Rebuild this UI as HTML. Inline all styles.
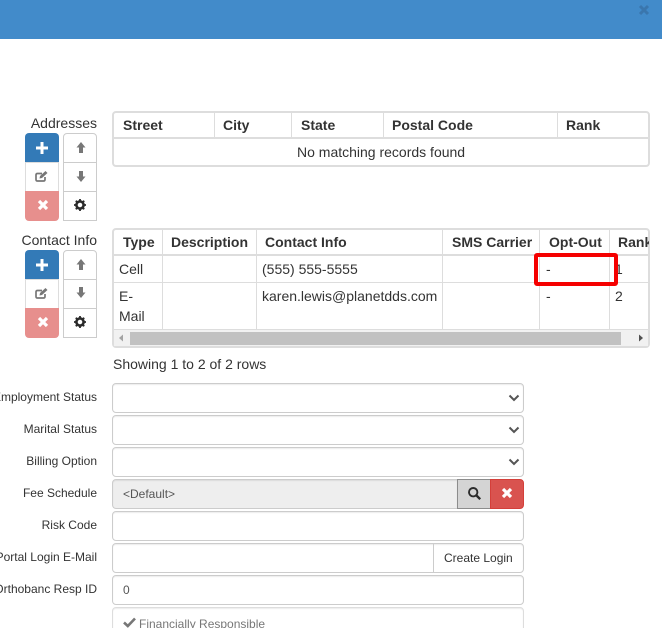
<!DOCTYPE html>
<html><head><meta charset="utf-8">
<style>
html,body{margin:0;padding:0;background:#fff}
#p{position:relative;width:662px;height:628px;overflow:hidden;background:#fff;font-family:"Liberation Sans",sans-serif;font-size:14px;color:#333}
#p div,#p svg{position:absolute;box-sizing:border-box}
.t{white-space:nowrap;line-height:20px}
.b{font-weight:bold}
.l{right:565px;font-size:12px;white-space:nowrap;line-height:16px;text-align:right}
.l2{right:565px;font-size:14px;white-space:nowrap;line-height:18px}
.c{left:112px;width:412px;height:30px;border:1px solid #ccc;border-radius:4px;box-shadow:inset 0 1px 1px rgba(0,0,0,.075);background:#fff}
.h{background:#ddd}
.s{font-size:12px;white-space:nowrap;line-height:16px}
</style></head><body><div id="p">
<div style="left:0;top:0;width:662px;height:39px;background:#428bca"></div>
<svg style="left:638px;top:4px" width="12" height="12" viewBox="0 0 12 12"><path d="M2 2L10 10M10 2L2 10" stroke="#3a76ad" stroke-width="3"/></svg>

<!-- Addresses -->
<div class="l2" style="top:114px">Addresses</div>
<div style="left:25px;top:133px;width:34px;height:30px;background:#337ab7;border-radius:4px 4px 0 0"></div>
<div style="left:25px;top:162px;width:34px;height:30px;background:#fff;border:1px solid #ddd;border-width:1px"></div>
<div style="left:25px;top:191px;width:34px;height:30px;background:#e78f8d;border-radius:0 0 4px 4px"></div>
<div style="left:63px;top:133px;width:34px;height:30px;border:1px solid #ccc;border-radius:4px 4px 0 0"></div>
<div style="left:63px;top:162px;width:34px;height:30px;border:1px solid #ccc"></div>
<div style="left:63px;top:191px;width:34px;height:30px;border:1px solid #ccc"></div>
<svg style="left:35px;top:141px" width="14" height="14" viewBox="0 0 14 14"><path d="M7 1V13M1 7H13" stroke="#fff" stroke-width="3"/></svg>
<svg style="left:35px;top:170px" width="14" height="14" viewBox="0 0 14 14"><path d="M10 7V9.5Q10 11 8.5 11H2.5Q1 11 1 9.5V5Q1 3.5 2.5 3.5H7" fill="none" stroke="#777" stroke-width="1.7"/><path d="M4.5 8.5L5 6L10.5 1L12.5 3L7 8Z" fill="#777"/></svg>
<svg style="left:35.5px;top:198px" width="14" height="14" viewBox="0 0 14 14"><path d="M3 3L11 11M11 3L3 11" stroke="#fff" stroke-width="3.2"/></svg>
<svg style="left:73.5px;top:140px" width="14" height="14" viewBox="0 0 14 14"><path d="M7 2L11.5 7.5H9V13H5V7.5H2.5Z" fill="#777"/></svg>
<svg style="left:73.5px;top:169px" width="14" height="14" viewBox="0 0 14 14"><path d="M7 13L11.5 7.5H9V2H5V7.5H2.5Z" fill="#777"/></svg>
<svg style="left:73px;top:198px" width="14" height="14" viewBox="0 0 14 14"><circle cx="7" cy="7" r="3.6" fill="none" stroke="#2b2b2b" stroke-width="2.6"/><path d="M7 1V13M1 7H13M2.8 2.8L11.2 11.2M11.2 2.8L2.8 11.2" stroke="#2b2b2b" stroke-width="1.8" stroke-dasharray="2.2 8"/></svg>

<!-- Address table -->
<div style="left:112px;top:111px;width:538px;height:56px;border:2px solid #ddd;border-radius:4px"></div>
<div class="h" style="left:113px;top:137px;width:536px;height:2px"></div>
<div class="h" style="left:214px;top:113px;width:1px;height:24px"></div>
<div class="h" style="left:291px;top:113px;width:1px;height:24px"></div>
<div class="h" style="left:383px;top:113px;width:1px;height:24px"></div>
<div class="h" style="left:557px;top:113px;width:1px;height:24px"></div>
<div class="t b" style="left:123px;top:115px">Street</div>
<div class="t b" style="left:223px;top:115px">City</div>
<div class="t b" style="left:301px;top:115px">State</div>
<div class="t b" style="left:392px;top:115px">Postal Code</div>
<div class="t b" style="left:566px;top:115px">Rank</div>
<div class="t" style="left:297px;top:142px">No matching records found</div>

<!-- Contact Info -->
<div class="l2" style="top:231px">Contact Info</div>
<div style="left:25px;top:250px;width:34px;height:30px;background:#337ab7;border-radius:4px 4px 0 0"></div>
<div style="left:25px;top:279px;width:34px;height:30px;background:#fff;border:1px solid #ddd"></div>
<div style="left:25px;top:308px;width:34px;height:30px;background:#e78f8d;border-radius:0 0 4px 4px"></div>
<div style="left:63px;top:250px;width:34px;height:30px;border:1px solid #ccc;border-radius:4px 4px 0 0"></div>
<div style="left:63px;top:279px;width:34px;height:30px;border:1px solid #ccc"></div>
<div style="left:63px;top:308px;width:34px;height:30px;border:1px solid #ccc"></div>
<svg style="left:35px;top:258px" width="14" height="14" viewBox="0 0 14 14"><path d="M7 1V13M1 7H13" stroke="#fff" stroke-width="3"/></svg>
<svg style="left:35px;top:287px" width="14" height="14" viewBox="0 0 14 14"><path d="M10 7V9.5Q10 11 8.5 11H2.5Q1 11 1 9.5V5Q1 3.5 2.5 3.5H7" fill="none" stroke="#777" stroke-width="1.7"/><path d="M4.5 8.5L5 6L10.5 1L12.5 3L7 8Z" fill="#777"/></svg>
<svg style="left:35.5px;top:315px" width="14" height="14" viewBox="0 0 14 14"><path d="M3 3L11 11M11 3L3 11" stroke="#fff" stroke-width="3.2"/></svg>
<svg style="left:73.5px;top:257px" width="14" height="14" viewBox="0 0 14 14"><path d="M7 2L11.5 7.5H9V13H5V7.5H2.5Z" fill="#777"/></svg>
<svg style="left:73.5px;top:285px" width="14" height="14" viewBox="0 0 14 14"><path d="M7 13L11.5 7.5H9V2H5V7.5H2.5Z" fill="#777"/></svg>
<svg style="left:73px;top:315px" width="14" height="14" viewBox="0 0 14 14"><circle cx="7" cy="7" r="3.6" fill="none" stroke="#2b2b2b" stroke-width="2.6"/><path d="M7 1V13M1 7H13M2.8 2.8L11.2 11.2M11.2 2.8L2.8 11.2" stroke="#2b2b2b" stroke-width="1.8" stroke-dasharray="2.2 8"/></svg>

<!-- Contact table -->
<div style="left:112px;top:228px;width:538px;height:120px;border:2px solid #ddd;border-radius:4px"></div>
<div class="h" style="left:113px;top:254px;width:536px;height:2px"></div>
<div class="h" style="left:113px;top:282px;width:536px;height:1px"></div>
<div class="h" style="left:113px;top:329px;width:536px;height:1px"></div>
<div class="h" style="left:162px;top:230px;width:1px;height:99px"></div>
<div class="h" style="left:256px;top:230px;width:1px;height:99px"></div>
<div class="h" style="left:442px;top:230px;width:1px;height:99px"></div>
<div class="h" style="left:539px;top:230px;width:1px;height:99px"></div>
<div class="h" style="left:609px;top:230px;width:1px;height:99px"></div>
<div class="t b" style="left:123px;top:232px">Type</div>
<div class="t b" style="left:171px;top:232px">Description</div>
<div class="t b" style="left:265px;top:232px">Contact Info</div>
<div class="t b" style="left:452px;top:232px">SMS Carrier</div>
<div class="t b" style="left:549px;top:232px">Opt-Out</div>
<div class="t b" style="left:618px;top:232px;width:31px;overflow:hidden">Rank</div>
<div class="t" style="left:119px;top:259px">Cell</div>
<div class="t" style="left:262px;top:259px">(555) 555-5555</div>
<div class="t" style="left:546px;top:259px">-</div>
<div class="t" style="left:615px;top:259px">1</div>
<div class="t" style="left:119px;top:286px">E-</div>
<div class="t" style="left:119px;top:306px">Mail</div>
<div class="t" style="left:262px;top:286px">karen.lewis@planetdds.com</div>
<div class="t" style="left:546px;top:286px">-</div>
<div class="t" style="left:615px;top:286px">2</div>
<!-- scrollbar -->
<div style="left:114px;top:330px;width:534px;height:16px;background:#f1f1f1"></div>
<div style="left:130px;top:332px;width:491px;height:13px;background:#c1c1c1"></div>
<svg style="left:116px;top:333px" width="10" height="10" viewBox="0 0 10 10"><path d="M7 1.5V8.5L3 5Z" fill="#a3a3a3"/></svg>
<svg style="left:636px;top:333px" width="10" height="10" viewBox="0 0 10 10"><path d="M3 1.5V8.5L7 5Z" fill="#505050"/></svg>
<!-- red box -->
<div style="left:534px;top:253px;width:84px;height:33px;border:4px solid #f50000;border-radius:3px"></div>

<div class="t" style="left:113px;top:354px">Showing 1 to 2 of 2 rows</div>

<!-- form -->
<div class="l" style="top:389px">Employment Status</div>
<div class="l" style="top:421px">Marital Status</div>
<div class="l" style="top:453px">Billing Option</div>
<div class="l" style="top:485px">Fee Schedule</div>
<div class="l" style="top:517px">Risk Code</div>
<div class="l" style="top:549px">Portal Login E-Mail</div>
<div class="l" style="top:581px">Orthobanc Resp ID</div>

<div class="c" style="top:383px"></div>
<div class="c" style="top:415px"></div>
<div class="c" style="top:447px"></div>
<svg style="left:507px;top:393px" width="14" height="10" viewBox="0 0 14 10"><path d="M2.5 2.5L7 7L11.5 2.5" fill="none" stroke="#555" stroke-width="2"/></svg>
<svg style="left:507px;top:425px" width="14" height="10" viewBox="0 0 14 10"><path d="M2.5 2.5L7 7L11.5 2.5" fill="none" stroke="#555" stroke-width="2"/></svg>
<svg style="left:507px;top:457px" width="14" height="10" viewBox="0 0 14 10"><path d="M2.5 2.5L7 7L11.5 2.5" fill="none" stroke="#555" stroke-width="2"/></svg>

<div class="c" style="top:479px;width:346px;background:#eee;border-radius:4px 0 0 4px"></div>
<div class="s" style="left:123px;top:486px;color:#555">&lt;Default&gt;</div>
<div style="left:457px;top:479px;width:34px;height:30px;background:#d4d4d4;border:1px solid #8c8c8c"></div>
<div style="left:490px;top:479px;width:34px;height:30px;background:#d9534f;border:1px solid #d43f3a;border-radius:0 4px 4px 0"></div>
<svg style="left:467px;top:486px" width="15" height="15" viewBox="0 0 15 15"><circle cx="6.2" cy="6.2" r="4.2" fill="none" stroke="#2b2b2b" stroke-width="1.9"/><path d="M9.5 9.5L13.2 13.2" stroke="#2b2b2b" stroke-width="2.4"/></svg>
<svg style="left:500px;top:486px" width="14" height="14" viewBox="0 0 14 14"><path d="M3 3L11 11M11 3L3 11" stroke="#fff" stroke-width="3.2"/></svg>

<div class="c" style="top:511px"></div>
<div class="c" style="top:543px"></div>
<div style="left:433px;top:543px;width:1px;height:30px;background:#ccc"></div>
<div class="s" style="left:444px;top:550px">Create Login</div>
<div class="c" style="top:575px"></div>
<div class="s" style="left:123px;top:582px;color:#555">0</div>
<div class="c" style="top:607px;height:40px;border-color:#ddd"></div>
<svg style="left:123px;top:616px" width="13" height="12" viewBox="0 0 13 12"><path d="M1 6.5L4.8 10L12 2.5" fill="none" stroke="#777" stroke-width="2.6"/></svg>
<div class="s" style="left:139px;top:616px;color:#777">Financially Responsible</div>
</div></body></html>
